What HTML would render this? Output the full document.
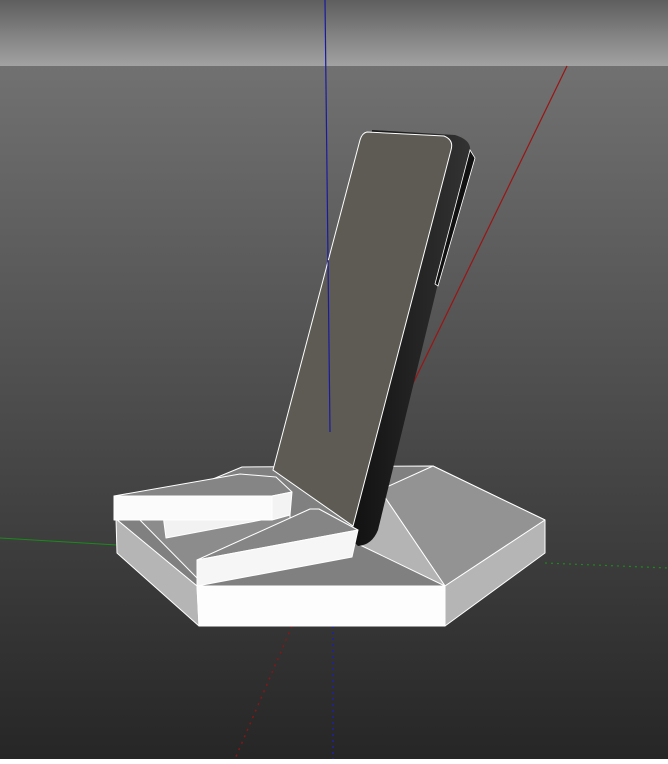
<!DOCTYPE html>
<html><head><style>html,body{margin:0;padding:0;overflow:hidden}</style></head><body>
<svg width="668" height="759" viewBox="0 0 668 759" xmlns="http://www.w3.org/2000/svg">
<defs>
<linearGradient id="top" x1="0" y1="0" x2="0" y2="1"><stop offset="0" stop-color="#5e5e5e"/><stop offset="1" stop-color="#a2a2a2"/></linearGradient>
<linearGradient id="bg" x1="0" y1="0" x2="0" y2="1"><stop offset="0" stop-color="#717171"/><stop offset="1" stop-color="#262626"/></linearGradient>
<linearGradient id="body" x1="0" y1="0" x2="1" y2="0"><stop offset="0" stop-color="#111"/><stop offset="1" stop-color="#333"/></linearGradient>
</defs>
<rect x="0" y="0" width="668" height="66" fill="url(#top)"/>
<rect x="0" y="66" width="668" height="693" fill="url(#bg)"/>
<line x1="325" y1="0" x2="330" y2="432" stroke="#1a1aa0" stroke-width="1.2"/>
<line x1="567" y1="66" x2="405" y2="400" stroke="#9a1515" stroke-width="1.2"/>
<line x1="0" y1="538" x2="117" y2="545" stroke="#1a8a1a" stroke-width="1"/>
<line x1="545" y1="563" x2="668" y2="568" stroke="#1a8a1a" stroke-width="1.2" stroke-dasharray="2,4"/>
<line x1="333" y1="626" x2="333" y2="759" stroke="#2020a0" stroke-width="1.5" stroke-dasharray="2,4"/>
<line x1="292" y1="626" x2="235" y2="759" stroke="#8a1515" stroke-width="1.5" stroke-dasharray="2,5"/>
<g stroke="#fff" stroke-width="1" stroke-linejoin="round">
<polygon points="116,519 242,467 433,466 545,520 445,586 197,586" fill="#808080"/>
<polygon points="380,490 433,466 545,520 445,586" fill="#939393"/>
<polygon points="370,495 380,490 445,586 360,545" fill="#b4b4b4"/>
<polygon points="116,519 197,586 199,626 117,553" fill="#b5b5b5"/>
<polygon points="445,586 545,520 545,553 445,626" fill="#b5b5b5"/>
<polygon points="197,586 445,586 445,626 199,626" fill="#fdfdfd"/>
<polygon points="133,513 200,515 290,512 290,520 197,578" fill="#8c8c8c"/>
<polygon points="163,515 260,511 272,518 166,538" fill="#f2f2f2"/>
<polygon points="114,496 240,474 276,477 292,492 272,496" fill="#858585"/>
<polygon points="114,496 272,496 272,520 114,520" fill="#fbfbfb"/>
<polygon points="272,496 292,492 290,515 272,520" fill="#f3f3f3"/>
</g>
<path d="M372,130 L455,135 Q472,140 470,152 L378,530 Q372,545 358,546 L352,540 Z" fill="url(#body)"/>
<path d="M470,150 L475,158 L438,286 L435,284 Z" fill="#111" stroke="#fff" stroke-width="0.8"/>
<path d="M367,132 L444,136 Q454,140 451,150 L353,526 L273,470 L360,140 Q362,133 367,132 Z" fill="#5e5b54" stroke="#fff" stroke-width="1"/>
<line x1="328" y1="260" x2="330" y2="432" stroke="#1a1aa0" stroke-width="1.2"/>
<g stroke="#fff" stroke-width="1" stroke-linejoin="round">
<polygon points="197,560 310,509 319,509 358,530" fill="#858585"/>
<polygon points="197,560 358,530 352,557 197,586" fill="#f6f6f6"/>
</g>
</svg>
</body></html>
